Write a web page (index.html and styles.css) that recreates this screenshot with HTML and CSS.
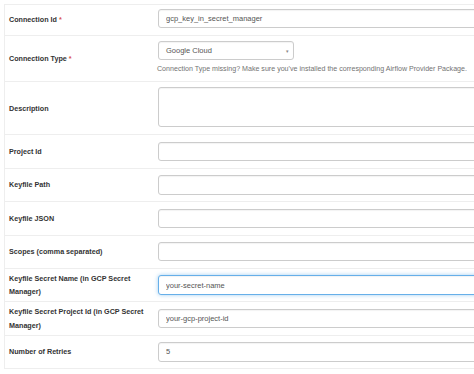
FILE: index.html
```html
<!DOCTYPE html>
<html lang="en">
<head>
    <meta charset="UTF-8">
    <title>Edit Connection</title>
    <link rel="stylesheet" href="styles.css">
</head>
<body>
    <div class="form-table">
        <div class="row row-first">
            <div class="label-cell">Connection Id <span class="req">*</span></div>
            <div class="field-cell"><input type="text" class="field" value="gcp_key_in_secret_manager"></div>
        </div>
        <div class="row row-type">
            <div class="label-cell">Connection Type <span class="req">*</span></div>
            <div class="field-cell">
                <div class="select-box"><span>Google Cloud</span><span class="arrow">&#9662;</span></div>
                <p class="help">Connection Type missing? Make sure you've installed the corresponding Airflow Provider Package.</p>
            </div>
        </div>
        <div class="row row-desc">
            <div class="label-cell">Description</div>
            <div class="field-cell"><textarea class="field area"></textarea></div>
        </div>
        <div class="row">
            <div class="label-cell">Project Id</div>
            <div class="field-cell"><input type="text" class="field"></div>
        </div>
        <div class="row">
            <div class="label-cell">Keyfile Path</div>
            <div class="field-cell"><input type="text" class="field"></div>
        </div>
        <div class="row">
            <div class="label-cell">Keyfile JSON</div>
            <div class="field-cell"><input type="text" class="field"></div>
        </div>
        <div class="row">
            <div class="label-cell">Scopes (comma separated)</div>
            <div class="field-cell"><input type="text" class="field"></div>
        </div>
        <div class="row">
            <div class="label-cell">Keyfile Secret Name (in GCP Secret Manager)</div>
            <div class="field-cell"><input type="text" class="field focused" value="your-secret-name"></div>
        </div>
        <div class="row">
            <div class="label-cell">Keyfile Secret Project Id (in GCP Secret Manager)</div>
            <div class="field-cell"><input type="text" class="field" value="your-gcp-project-id"></div>
        </div>
        <div class="row">
            <div class="label-cell">Number of Retries</div>
            <div class="field-cell"><input type="text" class="field" value="5"></div>
        </div>
    </div>
</body>
</html>
```

FILE: styles.css
```css
body {
    margin: 0;
    padding: 0;
    background-color: #fff;
    font-family: "Liberation Sans", Arial, sans-serif;
    color: #333;
    overflow: hidden;
}

.form-table {
    margin: 4px 0 0 4px;
    width: 490px;
    border-left: 1px solid #eee;
    border-bottom: 1px solid #eee;
}

.row {
    display: grid;
    grid-template-columns: 149px 1fr;
    border-top: 1px solid #eee;
}

.label-cell {
    display: flex;
    align-items: center;
    padding: 0 6px 0 4px;
    font-size: 7.2px;
    line-height: 13.5px;
    font-weight: bold;
}

.req {
    color: #d9534f;
    margin-left: 2px;
}

.field-cell {
    padding: 6.5px 0 6.5px 4px;
}

.row-first .field-cell {
    padding: 4px 0 7px 4px;
}

.row-type .field-cell {
    padding: 5px 0 7px 4px;
}

.row-desc .field-cell {
    padding: 5px 0 7px 4px;
}

.field {
    display: block;
    box-sizing: border-box;
    width: 100%;
    height: 19.4px;
    margin: 0;
    padding: 0 7px;
    font-family: inherit;
    font-size: 7.5px;
    color: #555;
    background: #fff;
    border: 1px solid #ccc;
    border-radius: 3px;
    box-shadow: inset 0 1px 1px rgba(0, 0, 0, 0.05);
    outline: none;
}

.area {
    height: 40px;
    resize: none;
}

.focused {
    border-color: #66afe9;
    box-shadow: inset 0 1px 1px rgba(0, 0, 0, 0.05), 0 0 4px rgba(102, 175, 233, 0.6);
}

.select-box {
    box-sizing: border-box;
    width: 136px;
    height: 19px;
    display: flex;
    align-items: center;
    justify-content: space-between;
    padding: 0 4px 0 7px;
    font-size: 7.5px;
    color: #555;
    border: 1px solid #ccc;
    border-radius: 3px;
    box-shadow: inset 0 1px 1px rgba(0, 0, 0, 0.05);
}

.arrow {
    font-size: 5px;
    color: #888;
}

.help {
    margin: 4px 0 0 -1px;
    font-size: 7.1px;
    line-height: 10px;
    color: #737373;
    white-space: nowrap;
}
```
